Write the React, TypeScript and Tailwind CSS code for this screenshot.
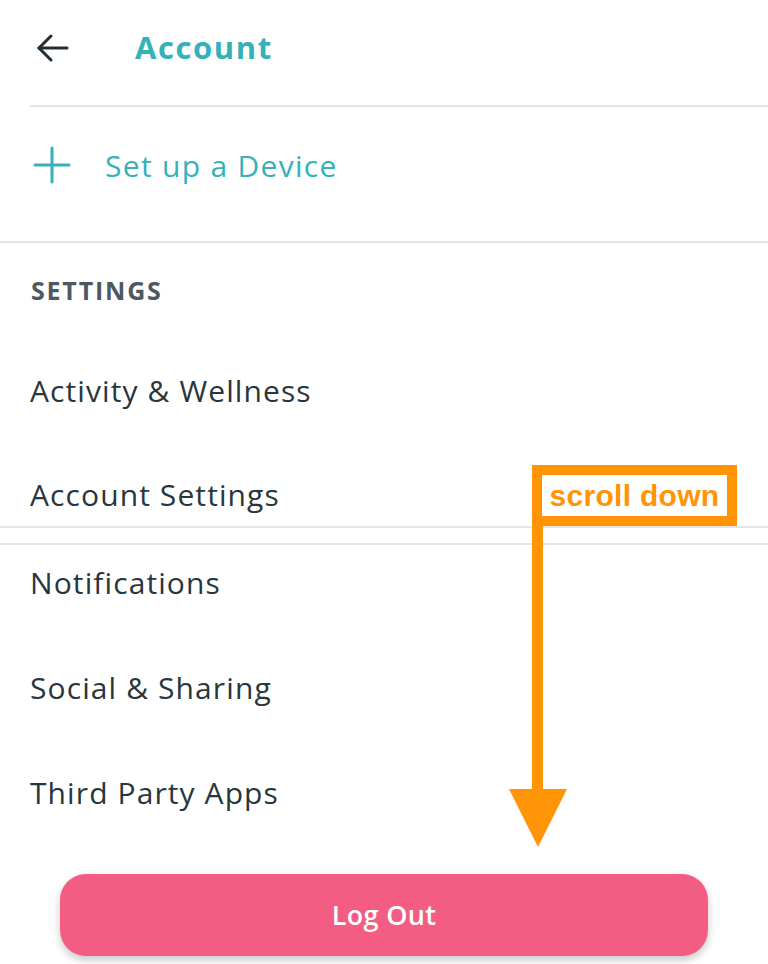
const TEAL = '#34b1b9'

function Divider({ inset = false }: { inset?: boolean }) {
  return <div className={`h-[2px] bg-[#e4e4e4] shrink-0 ${inset ? 'ml-[30px]' : ''}`} />
}

function Row({ label, className = '' }: { label: string; className?: string }) {
  return (
    <div className={`flex items-center pl-[30px] text-[30px] tracking-[1.1px] text-[#28363d] shrink-0 ${className}`}>
      {label}
    </div>
  )
}

export default function App() {
  return (
    <div
      className="relative w-[768px] h-[964px] bg-white overflow-hidden flex flex-col"
      style={{ fontFamily: '"Open Sans", Lato, sans-serif' }}
    >
      {/* Header */}
      <header className="flex items-center h-[105px] pb-[10px] pl-[36px] shrink-0">
        <svg width="33" height="28" viewBox="0 0 33 28" fill="none" stroke="#222c33" strokeWidth="3" strokeLinecap="round" strokeLinejoin="round">
          <path d="M3 14H31" />
          <path d="M15 2L3 14L15 26" />
        </svg>
        <h1 className="ml-[66px] text-[31px] font-bold tracking-[1.6px]" style={{ color: TEAL }}>
          Account
        </h1>
      </header>
      <Divider inset />

      {/* Set up a Device */}
      <div className="flex items-center h-[134px] pb-[18px] pl-[33px] shrink-0">
        <svg width="38" height="38" viewBox="0 0 38 38" fill="none" stroke={TEAL} strokeWidth="3" strokeLinecap="round">
          <path d="M19 2V36" />
          <path d="M2 19H36" />
        </svg>
        <span className="ml-[34px] text-[30px] tracking-[1.3px]" style={{ color: TEAL }}>
          Set up a Device
        </span>
      </div>
      <Divider />

      {/* Settings */}
      <div className="flex items-center h-[95px] pl-[31px] text-[25px] font-bold text-[#4d5960] tracking-[1.8px] shrink-0">
        SETTINGS
      </div>
      <Row label="Activity & Wellness" className="h-[104px]" />
      <Row label="Account Settings" className="h-[84px] pt-[20px]" />
      <Divider />
      <div className="h-[15px] shrink-0" />
      <Divider />
      <Row label="Notifications" className="h-[90px] pb-[15px]" />
      <Row label="Social & Sharing" className="h-[105px]" />
      <Row label="Third Party Apps" className="h-[105px]" />

      {/* Log Out */}
      <button className="mt-[29px] mx-[60px] h-[82px] rounded-[26px] bg-[#f35c83] text-white text-[27px] font-semibold tracking-[0.3px] shadow-[0_4px_8px_rgba(0,0,0,0.22)] shrink-0">
        Log Out
      </button>

      {/* Annotation overlay */}
      <div className="absolute left-[532px] top-[465px] w-[205px] h-[61px] border-[10px] border-[#ff9406] flex items-center justify-center">
        <span
          className="text-[30px] font-bold text-[#ff9406] leading-none tracking-[0.3px]"
          style={{ fontFamily: '"Liberation Sans", Arial, sans-serif' }}
        >
          scroll down
        </span>
      </div>
      <div className="absolute left-[532px] top-[520px] w-[11px] h-[272px] bg-[#ff9406]" />
      <svg className="absolute left-[509px] top-[789px]" width="58" height="58" viewBox="0 0 58 58">
        <polygon points="0,0 58,0 29,58" fill="#ff9406" />
      </svg>
    </div>
  )
}
